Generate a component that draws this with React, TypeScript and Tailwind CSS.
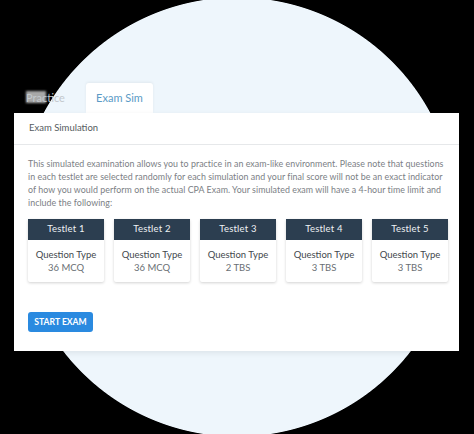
import React from "react";

const testlets = [
  { name: "Testlet 1", count: "36 MCQ" },
  { name: "Testlet 2", count: "36 MCQ" },
  { name: "Testlet 3", count: "2 TBS" },
  { name: "Testlet 4", count: "3 TBS" },
  { name: "Testlet 5", count: "3 TBS" },
];

const intro = [
  "This simulated examination allows you to practice in an exam-like environment. Please note that questions",
  "in each testlet are selected randomly for each simulation and your final score will not be an exact indicator",
  "of how you would perform on the actual CPA Exam. Your simulated exam will have a 4-hour time limit and",
  "include the following:",
];

export default function App() {
  return (
    <div
      className="flex h-[434px] w-[474px] flex-col overflow-hidden bg-black bg-[radial-gradient(circle_220px_at_237px_217px,#eef6fc_99.6%,#000_100%)] pl-[14px] pt-[83px]"
      style={{ fontFamily: "Lato, 'Open Sans', sans-serif" }}
    >
      {/* tabs */}
      <div className="flex h-[30px] items-stretch">
        <div className="relative flex w-[72px] items-center pl-[12px] text-[11px] text-[#c3c8cd]">
          <span className="absolute left-[12px] top-[8px] h-[12px] w-[20px] bg-[#a8a8a8] blur-[1px]" />
          <span className="relative">Practice</span>
        </div>
        <div className="flex w-[67px] items-center justify-center rounded-t-[3px] bg-white text-[11px] text-[#5b9bc6] shadow-[0_-1px_3px_rgba(0,0,0,0.06)]">
          Exam Sim
        </div>
      </div>

      {/* card */}
      <div className="flex h-[238px] w-[445px] flex-col bg-white shadow-[0_2px_6px_rgba(0,0,0,0.08)]">
        <div className="flex h-[32px] items-center border-b border-[#e6e8ea] px-[15px] text-[9.5px] text-[#555b60]">
          Exam Simulation
        </div>
        <div className="flex flex-col pl-[14px] pr-[10px] pt-[12px]">
          <p className="text-[8.85px] leading-[13px] tracking-[0.05px] text-[#7b8085]">
            {intro.map((line) => (
              <span key={line} className="block whitespace-nowrap">
                {line}
              </span>
            ))}
          </p>
          <div className="mt-[10px] flex gap-[10px]">
            {testlets.map((t) => (
              <div
                key={t.name}
                className="flex w-[76px] flex-col rounded-[2px] bg-white shadow-[0_1px_3px_rgba(0,0,0,0.18)]"
              >
                <div className="flex h-[21px] items-center justify-center bg-[#2c3e50] text-[9.5px] tracking-[0.2px] text-[#eef1f4]">
                  {t.name}
                </div>
                <div className="flex h-[42px] flex-col items-center justify-center text-[9.5px] leading-[13px]">
                  <span className="text-[#43484d]">Question Type</span>
                  <span className="text-[#6a6f74]">{t.count}</span>
                </div>
              </div>
            ))}
          </div>
          <button
            type="button"
            className="mt-[30px] flex h-[20px] w-[65px] items-center justify-center rounded-[3px] bg-[#2a8ae0] text-[8.6px] font-bold text-white"
          >
            START EXAM
          </button>
        </div>
      </div>
    </div>
  );
}
